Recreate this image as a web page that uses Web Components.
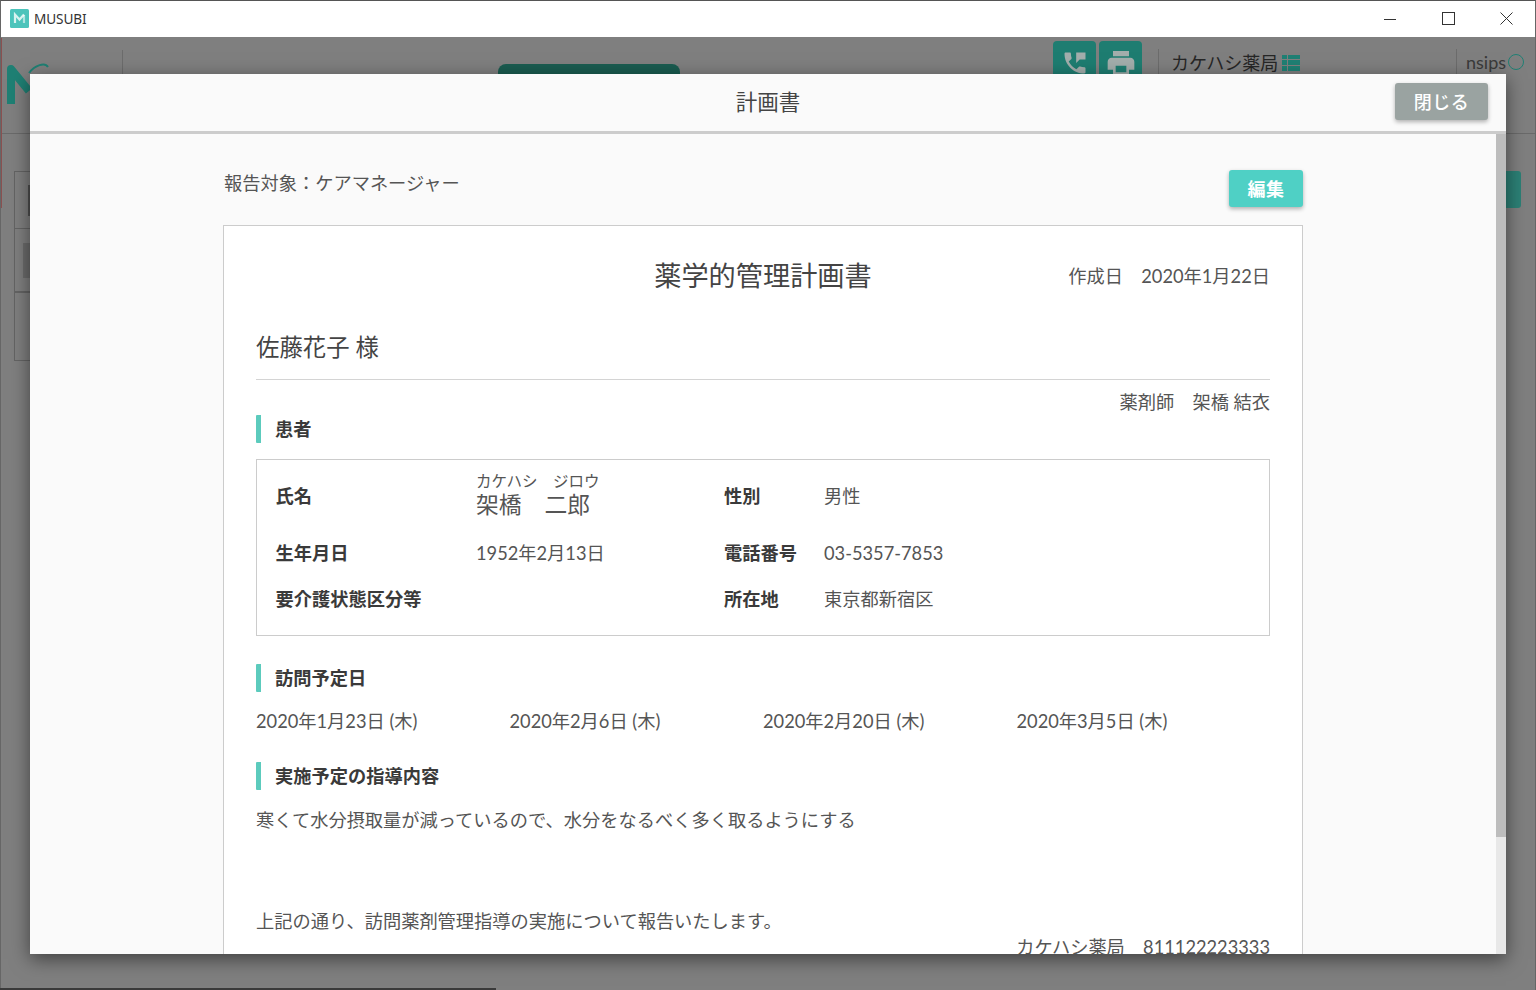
<!DOCTYPE html>
<html lang="ja">
<head>
<meta charset="utf-8">
<title>MUSUBI</title>
<style>
html,body{margin:0;padding:0;height:100%;overflow:hidden}
body{font-family:Lato,"Noto Sans CJK JP",sans-serif;color:#444}
</style>
</head>
<body>
<app-window>
  <title-bar slot="title"></title-bar>
  <backdrop-app slot="behind"></backdrop-app>
  <plan-modal slot="modal" heading="計画書" action="閉じる">
    <plan-report></plan-report>
  </plan-modal>
</app-window>
<script>
function el(name, css, html){
  customElements.define(name, class extends HTMLElement{
    connectedCallback(){
      if(this.shadowRoot) return;
      const r=this.attachShadow({mode:'open'});
      r.innerHTML='<style>'+css+'</style>'+(typeof html==='function'?html(this):html);
    }
  });
}
const FONT='Lato,"Noto Sans CJK JP",sans-serif';

el('app-window',`
:host{display:flex;flex-direction:column;width:1536px;height:990px;position:relative;overflow:hidden;box-sizing:border-box;background:#7f7f7f;font-family:${FONT}}
.main{flex:1;position:relative;min-height:0;display:flex;flex-direction:column}
.frame{position:absolute;inset:0;border:1px solid #666;border-bottom:0;border-top-color:#555;pointer-events:none;z-index:5}
.edge{position:absolute;left:0;bottom:0;width:496px;height:2px;background:#3a3a3a;z-index:5}
`,`<slot name="title"></slot><div class="main"><slot name="behind"></slot><slot name="modal"></slot></div><div class="frame"></div><div class="edge"></div>`);

el('title-bar',`
:host{display:flex;align-items:center;height:37px;background:#fff;flex:none;padding:0 0 0 10px;box-sizing:border-box;font-family:"Noto Sans","Noto Sans CJK JP",sans-serif;color:#333}
.name{font-size:13.6px;margin-left:5px;letter-spacing:-.1px;flex:1}
.ctl{width:58px;height:36px;display:flex;align-items:center;justify-content:center}
.ctl svg{display:block}
.ctl:last-child{width:59px}
`,`<svg width="19" height="19" viewBox="0 0 19 19"><rect width="19" height="19" rx="1.5" fill="#4cc4bb"/><path d="M5 14V5.500L9.500 10.500L14 5.500" fill="none" stroke="#d8f3f0" stroke-width="2.200"/><path d="M14 6V14" stroke="#fff" stroke-width="2.200" opacity=".55"/></svg>
<span class="name">MUSUBI</span>
<span class="ctl"><svg width="12" height="12"><path d="M0 6.500H12" stroke="#333" stroke-width="1"/></svg></span>
<span class="ctl"><svg width="13" height="13"><rect x=".5" y=".5" width="12" height="12" fill="none" stroke="#333"/></svg></span>
<span class="ctl"><svg width="13" height="13"><path d="M.5 .5L12.500 12.500M12.500 .5L.5 12.500" stroke="#333" fill="none"/></svg></span>`);

el('backdrop-app',`
:host{display:flex;flex-direction:column;flex:1;min-height:0;background:#7f7f7f;color:#262626;font-family:${FONT};position:relative}
.head{height:97px;box-sizing:border-box;border-bottom:1px solid #6a6a6a;display:flex;align-items:flex-start;padding-left:7px;position:relative;flex:none}
.logo{margin-top:26px;flex:none}
.sep{width:1px;background:#6c6c6c;height:50px;margin-top:13px;flex:none}
.tab{width:182px;height:40px;background:#1a5c50;border-radius:8px 8px 0 0;margin:27px 0 0 375px;flex:none}
.icons{display:flex;gap:3px;margin:4px 0 0 373px;flex:none}
.icon{width:43px;height:44px;background:#1e7d71;border-radius:4px;display:flex;align-items:center;justify-content:center}
.store{font-size:18px;margin:13px 0 0 12px;display:flex;align-items:center;gap:4px;width:285px;line-height:26px}
.nsips{font-size:18px;margin:12px 0 0 9px;line-height:26px;color:#3a3a3a;display:flex;align-items:center}
.ring{width:16px;height:16px;border:1.500px solid #1f8074;border-radius:50%;box-sizing:border-box;margin-left:2px}
.body{flex:1;padding:37px 15px 0 14px;display:flex;flex-direction:column;align-items:stretch;position:relative}
.table{height:190px;width:200px;border:1px solid #646464;box-sizing:border-box;display:flex;flex-direction:column;position:relative}
.table .r1{border-bottom:1px solid #646464;height:56px}
.table .r2{border-bottom:2px solid #646464;height:62px}
.bar{position:absolute;left:13px;top:13px;width:3px;height:31px;background:#4f4f4f}
.block{position:absolute;left:8px;top:71px;width:8px;height:35px;background:#6c6c6c}
.green{align-self:flex-end;width:50px;height:37px;background:#2c8176;border-radius:3px;margin-bottom:-37px}
.red{position:absolute;left:0;top:1px;width:2px;height:170px;background:#8a5050}
`,`<div class="head">
<svg class="logo" width="42" height="44" viewBox="0 0 42 44"><path d="M4 41V6L22 28" fill="none" stroke="#1f8074" stroke-width="8" stroke-linejoin="round"/><path d="M22 10C28 2 38 -1 41 4" fill="none" stroke="#1f8074" stroke-width="2"/></svg>
<div class="sep" style="margin-left:73px"></div>
<div class="tab"></div>
<div class="icons">
<div class="icon"><svg width="28" height="28" viewBox="0 0 24 24"><path d="M6.600 10.800c1.400 2.800 3.800 5.100 6.600 6.600l2.200-2.200c.3-.3.7-.4 1-.2 1.100.4 2.300.6 3.600.6.600 0 1 .4 1 1V20c0 .6-.4 1-1 1C10.600 21 3 13.400 3 4c0-.6.4-1 1-1h3.500c.6 0 1 .4 1 1 0 1.300.2 2.500.6 3.600.1.300 0 .7-.2 1z" fill="#a3aeac"/><path d="M13 3h8v6h-5l-3 3z" fill="#a3aeac"/></svg></div>
<div class="icon"><svg width="32" height="32" viewBox="0 0 24 24"><path d="M19 8H5c-1.700 0-3 1.300-3 3v6h4v4h12v-4h4v-6c0-1.700-1.300-3-3-3zm-3 11H8v-5h8zM18 3H6v4h12z" fill="#a3aeac"/></svg></div>
</div>
<div class="sep" style="margin-left:16px;height:30px;margin-top:12px"></div>
<div class="store">カケハシ薬局<svg width="18" height="16" viewBox="0 0 18 16"><path d="M0 0h5v4H0zM6 0h12v4H6zM0 5h5v5H0zM6 5h12v5H6zM0 11h5v5H0zM6 11h12v5H6z" fill="#1f8074"/></svg></div>
<div class="sep" style="height:30px;margin-top:12px"></div>
<div class="nsips">nsips<span class="ring"></span></div>
</div>
<div class="red"></div>
<div class="body"><div class="green"></div><div class="table"><div class="r1"></div><div class="r2"></div><div class="bar"></div><div class="block"></div></div></div>`);

el('plan-modal',`
:host{position:absolute;left:30px;top:37px;width:1476px;height:880px;background:#fafafa;box-shadow:0 5px 18px rgba(0,0,0,.5);display:flex;flex-direction:column;font-family:${FONT};z-index:2}
.head{height:60px;flex:none;box-sizing:border-box;border-bottom:3px solid #ccc;display:grid;grid-template-columns:1fr auto 1fr;align-items:center;padding:0 18px}
h2{margin:-2px 0 0;font-size:21.500px;font-weight:400;color:#444;grid-column:2;line-height:30px}
.close{justify-self:end;margin-top:-3px}
.wrap{flex:1;min-height:0;display:flex}
.scroll{flex:1;min-width:0;overflow:hidden}
.track{width:10px;flex:none;background:#e8e8e8}
.thumb{height:703px;background:#bdbdbd}
`,(h)=>`<div class="head"><h2>${h.getAttribute('heading')}</h2><action-button class="close" tone="grey">${h.getAttribute('action')}</action-button></div>
<div class="wrap"><div class="scroll"><slot></slot></div><div class="track"><div class="thumb"></div></div></div>`);

el('action-button',`
:host{display:inline-flex;align-items:center;justify-content:center;height:37px;box-sizing:border-box;border-radius:3px;color:#fff;font-size:18px;font-weight:700;box-shadow:0 2px 4px rgba(0,0,0,.3);font-family:${FONT};letter-spacing:.5px;padding-bottom:2px}
:host([tone=grey]){background:#9aa3a1;width:93px;font-weight:500;padding-bottom:0}
:host([tone=teal]){background:#4fd0c5;width:74px}
`,`<slot></slot>`);

el('section-heading',`
:host{display:flex;align-items:center;height:28px;border-left:5px solid #5ccbbd;padding-left:14px;font-size:18.240px;font-weight:700;color:#3a3a3a;line-height:28px;border-radius:1px}
`,`<slot></slot>`);

el('patient-box',`
:host{display:grid;grid-template-columns:200.500px 248px 100px 1fr;grid-template-rows:52px 44px 46px;box-sizing:border-box;height:177px;border:1px solid #ccc;padding:10px 18.500px 0;align-items:end;font-size:18.240px;line-height:26px;color:#555}
b{font-weight:700;color:#3a3a3a}
.first{align-self:center}
.name{display:flex;flex-direction:column;color:#555;align-self:start;padding-top:1px}
.kana{font-size:15.500px;line-height:20px;white-space:pre}
.full{font-size:22.800px;line-height:26px;white-space:pre}
`,`<b class="first">氏名</b><div class="name"><span class="kana">カケハシ　ジロウ</span><span class="full">架橋　二郎</span></div><b class="first">性別</b><span class="first">男性</span>
<b>生年月日</b><span>1952年2月13日</span><b>電話番号</b><span>03-5357-7853</span>
<b>要介護状態区分等</b><span></span><b>所在地</b><span>東京都新宿区</span>`);

el('plan-document',`
:host{display:block;width:1080px;box-sizing:border-box;background:#fff;border:1px solid #ccc;border-bottom:0;padding:30px 32px 0;font-size:18.240px;line-height:26px;color:#555}
.top{display:grid;grid-template-columns:1fr auto 1fr;align-items:center;height:40px}
h1{margin:0;font-size:27.200px;font-weight:400;line-height:40px;color:#444;grid-column:2}
.date{justify-self:end;margin-top:-1px}
.to{margin-top:31px;height:40px;font-size:23.400px;line-height:40px;padding-bottom:12px;border-bottom:1px solid #d4d4d4;color:#444;white-space:pre}
.by{margin-top:9px;text-align:right;height:26px;white-space:pre}
.s1{margin-top:0}
patient-box{margin-top:16px}
.s2,.s3{margin-top:28px}
.dates{display:grid;grid-template-columns:repeat(4,1fr);margin-top:16px}
.note{margin-top:17px}
.closing{margin-top:75px}
.sign{text-align:right;white-space:pre}
`,`<div class="top"><h1>薬学的管理計画書</h1><span class="date">作成日　2020年1月22日</span></div>
<div class="to">佐藤花子 様</div>
<div class="by">薬剤師　架橋 結衣</div>
<section-heading class="s1">患者</section-heading>
<patient-box></patient-box>
<section-heading class="s2">訪問予定日</section-heading>
<div class="dates"><span>2020年1月23日 (木)</span><span>2020年2月6日 (木)</span><span>2020年2月20日 (木)</span><span>2020年3月5日 (木)</span></div>
<section-heading class="s3">実施予定の指導内容</section-heading>
<div class="note">寒くて水分摂取量が減っているので、水分をなるべく多く取るようにする</div>
<div class="closing">上記の通り、訪問薬剤管理指導の実施について報告いたします。</div>
<div class="sign">カケハシ薬局　811122223333</div>`);

el('plan-report',`
:host{display:block;padding:36px 193px 0;font-family:${FONT}}
.row{display:flex;justify-content:space-between;align-items:flex-start;height:55px}
.target{font-size:18.240px;line-height:26px;color:#555;margin-left:1px}
`,`<div class="row"><span class="target">報告対象：ケアマネージャー</span><action-button tone="teal">編集</action-button></div><plan-document></plan-document>`);
</script>
</body>
</html>
